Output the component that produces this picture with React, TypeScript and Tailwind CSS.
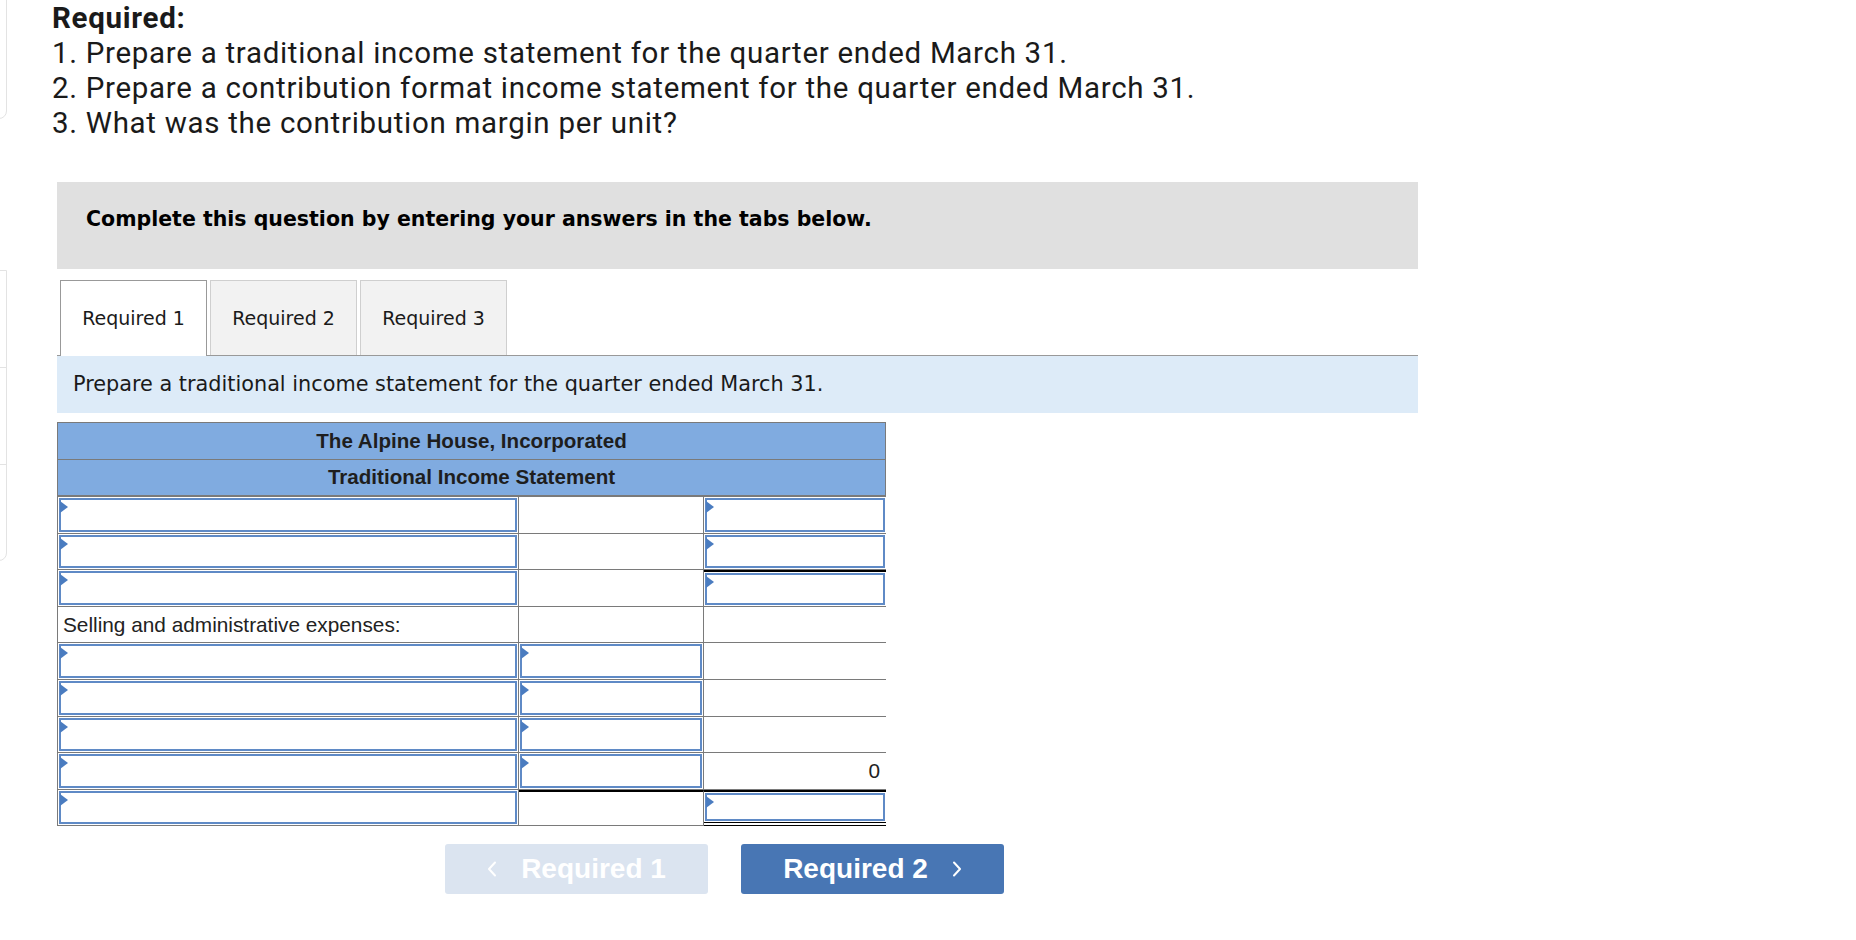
import React from "react";

const Tri = () => (
  <svg className="absolute left-[-1px] top-[1px]" width="8" height="12" viewBox="0 0 8 12">
    <polygon points="0,0 8,6 0,12" fill="#4a7cc0" />
  </svg>
);

type CellProps = {
  input?: boolean;
  text?: string;
  right?: string;
  topBlack?: boolean;
  dbl?: boolean;
  last?: boolean;
};

const Cell = ({ input, text, right, topBlack, dbl, last }: CellProps) => (
  <div
    className={
      "relative h-full border-b border-[#7a7a7a] " +
      (last ? "" : "border-r ") +
      (topBlack ? "border-t-2 border-t-black " : "") +
      (dbl ? "border-b-[4px] border-b-black border-double " : "")
    }
  >
    {input && (
      <div className="absolute inset-[1px] border-2 border-[#5f8ac6] bg-white">
        <Tri />
      </div>
    )}
    {text && (
      <div className="flex h-full items-center pl-[5px] text-[20.8px] text-[#222] [font-family:'Liberation_Sans',Arial,sans-serif]">
        {text}
      </div>
    )}
    {right && (
      <div className="flex h-full items-center justify-end pr-[6px] text-[20.8px] text-[#222] [font-family:'Liberation_Sans',Arial,sans-serif]">
        {right}
      </div>
    )}
  </div>
);

const rows: CellProps[][] = [
  [{ input: true }, {}, { input: true, last: true }],
  [{ input: true }, {}, { input: true, last: true }],
  [{ input: true }, {}, { input: true, last: true, topBlack: true }],
  [{ text: "Selling and administrative expenses:" }, {}, { last: true }],
  [{ input: true }, { input: true }, { last: true }],
  [{ input: true }, { input: true }, { last: true }],
  [{ input: true }, { input: true }, { last: true }],
  [{ input: true }, { input: true }, { last: true, right: "0" }],
  [{ input: true }, { topBlack: true }, { input: true, last: true, topBlack: true, dbl: true }],
];

const Chevron = ({ dir }: { dir: "l" | "r" }) => (
  <svg width="10" height="16" viewBox="0 0 10 16" fill="none">
    <path
      d={dir === "l" ? "M8 1.5 L2 8 L8 14.5" : "M2 1.5 L8 8 L2 14.5"}
      stroke="white"
      strokeWidth="2"
      strokeLinecap="round"
      strokeLinejoin="round"
    />
  </svg>
);

const verdana = "[font-family:'DejaVu_Sans',Verdana,sans-serif]";

export default function App() {
  return (
    <div className="flex h-[940px] w-[1856px] overflow-hidden bg-white text-[#1a1a1a]">
      {/* partially visible side cards */}
      <div className="flex w-[7px] shrink-0 flex-col">
        <div className="-ml-[200px] -mt-[10px] h-[129px] w-[207px] rounded-br-[8px] border border-[#e3e3e3]" />
        <div className="-ml-[200px] mt-[151px] flex h-[291px] w-[207px] flex-col rounded-br-[8px] border border-[#e3e3e3]">
          <div className="h-[97px] border-b border-[#e3e3e3]" />
          <div className="h-[97px] border-b border-[#e3e3e3]" />
          <div className="flex-1" />
        </div>
      </div>

      <div className="flex flex-col pl-[45px]">
        <div className="pt-[1px] text-[29.5px] leading-[35px] tracking-[0.7px] text-[#1a1a1a] [font-family:Roboto,sans-serif]">
          <div className="font-bold">Required:</div>
          <div>1. Prepare a traditional income statement for the quarter ended March 31.</div>
          <div>2. Prepare a contribution format income statement for the quarter ended March 31.</div>
          <div>3. What was the contribution margin per unit?</div>
        </div>

        <div className="ml-[5px] mt-[41px] w-[1361px]">
          <div className={"h-[87px] bg-[#e0e0e0] pl-[29px] pt-[24px] text-[20.5px] font-bold leading-[26px] text-black " + verdana}>
            Complete this question by entering your answers in the tabs below.
          </div>

          <div className="mt-[11px] flex items-end border-b border-[#999]">
            <div className="w-[3px]" />
            <div className={"-mb-px flex h-[76px] w-[147px] items-center justify-center border border-b-0 border-[#999] bg-white text-[19px] " + verdana}>
              Required 1
            </div>
            <div className={"ml-[3px] flex h-[75px] w-[147px] items-center justify-center border border-b-0 border-[#cfcfcf] bg-[#f2f2f2] text-[19px] " + verdana}>
              Required 2
            </div>
            <div className={"ml-[3px] flex h-[75px] w-[147px] items-center justify-center border border-b-0 border-[#cfcfcf] bg-[#f2f2f2] text-[19px] " + verdana}>
              Required 3
            </div>
          </div>

          <div className={"flex h-[57px] items-center bg-[#ddebf8] pl-[16px] text-[20.8px] " + verdana}>
            Prepare a traditional income statement for the quarter ended March 31.
          </div>

          <div className="mt-[9px] w-[829px] border-l border-t border-[#7a7a7a]">
            <div className="flex h-[37px] items-center justify-center border-b border-r border-[#7a7a7a] bg-[#80abe0] text-[20.6px] font-bold text-[#1e1e1e] [font-family:'Liberation_Sans',Arial,sans-serif]">
              The Alpine House, Incorporated
            </div>
            <div className="flex h-[37px] items-center justify-center border-b-2 border-r border-[#7a7a7a] bg-[#80abe0] text-[20.6px] font-bold text-[#1e1e1e] [font-family:'Liberation_Sans',Arial,sans-serif]">
              Traditional Income Statement
            </div>
            <div className="grid grid-cols-[461px_185px_182px] auto-rows-[36.6px]">
              {rows.map((r, i) => (
                <React.Fragment key={i}>
                  {r.map((c, j) => (
                    <Cell key={j} {...c} />
                  ))}
                </React.Fragment>
              ))}
            </div>
          </div>

          <div className="ml-[388px] mt-[18px] flex gap-[33px] [font-family:'Liberation_Sans',Arial,sans-serif]">
            <div className="flex h-[50px] w-[263px] items-center justify-center gap-[24px] rounded-[3px] bg-[#dbe4f0] text-[28px] font-bold text-white">
              <Chevron dir="l" />
              <span>Required 1</span>
            </div>
            <div className="flex h-[50px] w-[263px] items-center justify-center gap-[24px] rounded-[3px] bg-[#4876b4] text-[28px] font-bold text-white">
              <span>Required 2</span>
              <Chevron dir="r" />
            </div>
          </div>
        </div>
      </div>
    </div>
  );
}
